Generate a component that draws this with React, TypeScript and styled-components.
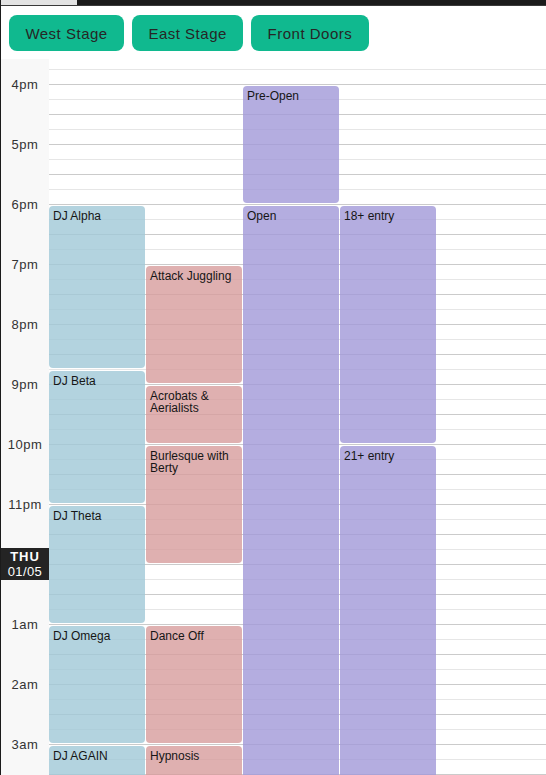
import React from "react";
import styled, { createGlobalStyle } from "styled-components";

const GlobalStyle = createGlobalStyle`
  html, body {
    margin: 0;
    padding: 0;
    overflow: hidden;
    background: #fff;
    font-family: "Liberation Sans", Arial, sans-serif;
  }
`;

const SLOT = 15;
const START_HOUR = 15.75;
const END_HOUR = 30;

const Frame = styled.div`
  height: 100vh;
  border-left: 1px solid #1b1b1b;
  display: flex;
  flex-direction: column;
  overflow: hidden;
`;

const TopBar = styled.div`
  height: 6px;
  background: #1b1b1b;
  border-bottom: 1px solid #3a3a3a;
  display: flex;
  align-items: flex-end;
`;

const ActiveTab = styled.div`
  width: 76px;
  height: 5px;
  background: #e4e4e4;
`;

const Toolbar = styled.div`
  display: flex;
  gap: 8px;
  padding: 9px 8px 8px 8px;
`;

const StageButton = styled.button`
  height: 36px;
  padding: 0 16.4px;
  border: none;
  border-radius: 8px;
  background: #10b98f;
  color: #262626;
  font-family: "Liberation Sans", Arial, sans-serif;
  font-size: 15px;
  letter-spacing: 0.5px;
  cursor: pointer;
`;

const Body = styled.div`
  display: grid;
  grid-template-columns: 48px repeat(4, 97px) 1fr;
  grid-template-rows: 10px repeat(${Math.round((END_HOUR - START_HOUR) * 4)}, ${SLOT}px);
  flex: 1;
`;

const Gutter = styled.div`
  grid-column: 1;
  grid-row: 1 / -1;
  background: #f8f8f8;
`;

const Lines = styled.div`
  grid-column: 2 / -1;
  grid-row: 2 / -1;
  background: repeating-linear-gradient(
    to bottom,
    #e6e6e6 0 1px,
    transparent 1px 15px,
    #cbcbcb 15px 16px,
    transparent 16px 30px
  );
`;

const TimeLabel = styled.div<{ $row: number }>`
  grid-column: 1;
  grid-row: ${(p) => p.$row - 1} / span 2;
  display: flex;
  align-items: center;
  justify-content: center;
  font-size: 13px;
  letter-spacing: 0.5px;
  color: #333;
  z-index: 1;
`;

const DateBadge = styled.div<{ $row: number }>`
  grid-column: 1;
  grid-row: ${(p) => p.$row - 1} / span 2;
  align-self: center;
  height: 32px;
  background: #242424;
  color: #fff;
  display: flex;
  flex-direction: column;
  align-items: center;
  justify-content: center;
  font-size: 13px;
  line-height: 15px;
  z-index: 1;
`;

const DayName = styled.span`
  font-weight: 700;
  letter-spacing: 1px;
`;

const DayDate = styled.span`
  letter-spacing: 0.4px;
`;

type Tone = "west" | "east" | "door";

const tones: Record<Tone, string> = {
  west: "rgba(160, 200, 215, 0.8)",
  east: "rgba(215, 156, 156, 0.8)",
  door: "rgba(161, 152, 216, 0.8)",
};

const Event = styled.div<{ $col: number; $tone: Tone }>`
  grid-column: ${(p) => p.$col + 1};
  margin: 2px 1px 1px 0;
  background: ${(p) => tones[p.$tone]};
  border-radius: 4px;
  padding: 4px 4px 2px;
  font-size: 12px;
  line-height: 12px;
  color: #161616;
  overflow: hidden;
  z-index: 1;
`;

const line = (h: number) => Math.round((h - START_HOUR) * 4) + 2;

type CalEvent = { title: string; col: number; tone: Tone; start: number; end: number };

const events: CalEvent[] = [
  { title: "DJ Alpha", col: 1, tone: "west", start: 18, end: 20.75 },
  { title: "DJ Beta", col: 1, tone: "west", start: 20.75, end: 23 },
  { title: "DJ Theta", col: 1, tone: "west", start: 23, end: 25 },
  { title: "DJ Omega", col: 1, tone: "west", start: 25, end: 27 },
  { title: "DJ AGAIN", col: 1, tone: "west", start: 27, end: 29 },
  { title: "Attack Juggling", col: 2, tone: "east", start: 19, end: 21 },
  { title: "Acrobats & Aerialists", col: 2, tone: "east", start: 21, end: 22 },
  { title: "Burlesque with Berty", col: 2, tone: "east", start: 22, end: 24 },
  { title: "Dance Off", col: 2, tone: "east", start: 25, end: 27 },
  { title: "Hypnosis", col: 2, tone: "east", start: 27, end: 28 },
  { title: "Pre-Open", col: 3, tone: "door", start: 16, end: 18 },
  { title: "Open", col: 3, tone: "door", start: 18, end: 30 },
  { title: "18+ entry", col: 4, tone: "door", start: 18, end: 22 },
  { title: "21+ entry", col: 4, tone: "door", start: 22, end: 30 },
];

const hourText = (h: number) => {
  const hh = h % 24;
  const suffix = hh < 12 ? "am" : "pm";
  const n = hh % 12 === 0 ? 12 : hh % 12;
  return `${n}${suffix}`;
};

const hours = Array.from({ length: 13 }, (_, i) => 16 + i);

const App: React.FC = () => {
  return (
    <>
      <GlobalStyle />
      <Frame>
        <TopBar>
          <ActiveTab />
        </TopBar>
        <Toolbar>
          <StageButton>West Stage</StageButton>
          <StageButton>East Stage</StageButton>
          <StageButton>Front Doors</StageButton>
        </Toolbar>
        <Body>
          <Gutter />
          <Lines />
          {hours.map((h) =>
            h === 24 ? (
              <DateBadge key={h} $row={line(h)}>
                <DayName>THU</DayName>
                <DayDate>01/05</DayDate>
              </DateBadge>
            ) : (
              <TimeLabel key={h} $row={line(h)}>
                {hourText(h)}
              </TimeLabel>
            )
          )}
          {events.map((ev) => (
            <Event
              key={ev.title}
              $col={ev.col}
              $tone={ev.tone}
              style={{ gridRow: `${line(ev.start)} / ${line(ev.end)}` }}
            >
              {ev.title}
            </Event>
          ))}
        </Body>
      </Frame>
    </>
  );
};

export default App;
